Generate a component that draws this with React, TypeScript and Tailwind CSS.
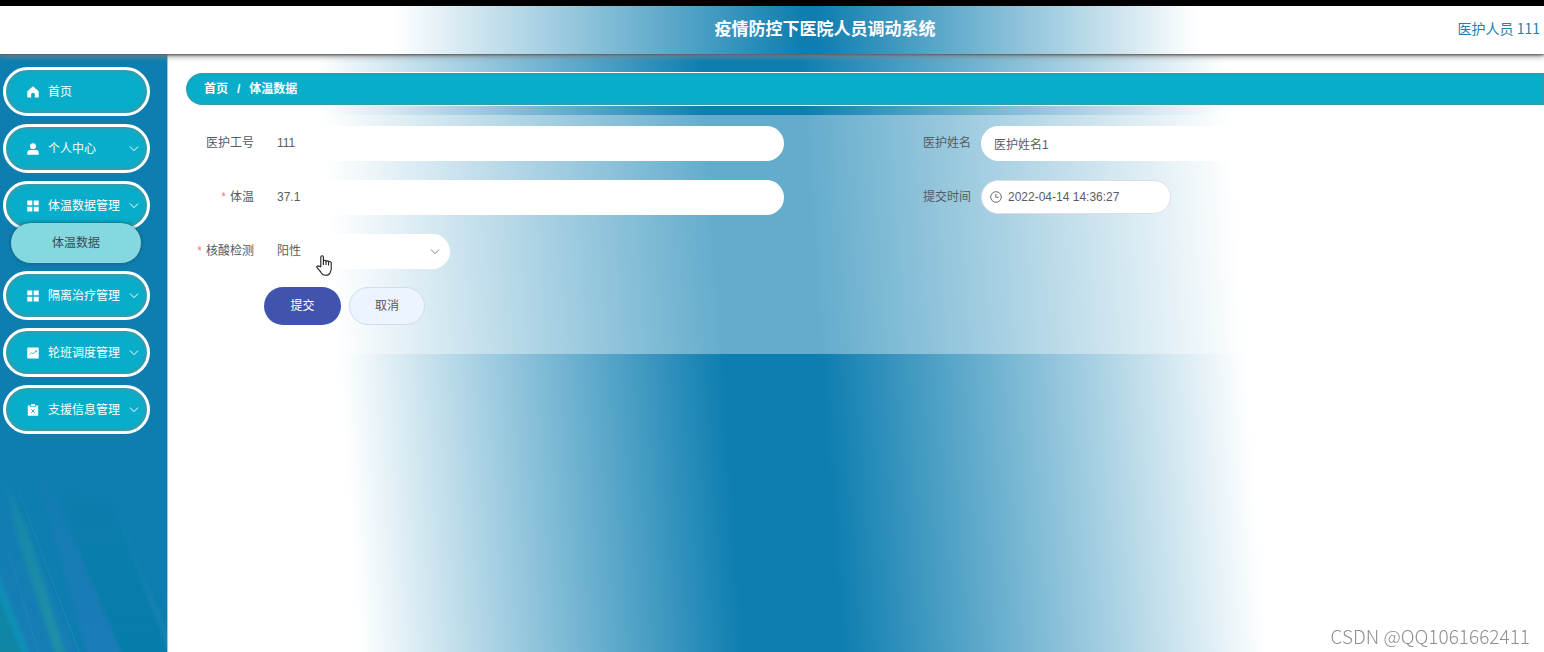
import type { ReactNode } from "react";

function HomeIcon() {
  return (
    <svg viewBox="0 0 12 12" className="size-3" fill="currentColor" aria-hidden="true">
      <path d="M6 .3 11.700 5.200V10.900a.7.7 0 0 1-.7.7H7.900V8.600a1.900 1.900 0 0 0-3.800 0v3H1a.7.7 0 0 1-.7-.7V5.200Z" />
    </svg>
  );
}

function UserIcon() {
  return (
    <svg viewBox="0 0 12 12" className="size-3" fill="currentColor" aria-hidden="true">
      <circle cx="6" cy="3.200" r="3" />
      <path d="M.3 11.700V9.800A2.800 2.800 0 0 1 3.100 7h5.800a2.800 2.800 0 0 1 2.800 2.800v1.900Z" />
    </svg>
  );
}

function GridIcon() {
  return (
    <svg viewBox="0 0 12 12" className="size-3" fill="currentColor" aria-hidden="true">
      <path d="M.3 .5h5v4.800h-5zM6.700 .5h5v4.800h-5zM.3 6.700h5v4.800h-5zM6.700 6.700h5v4.800h-5z" />
    </svg>
  );
}

function TrendIcon() {
  return (
    <svg viewBox="0 0 12 12" className="size-3" aria-hidden="true">
      <rect x=".3" y=".5" width="11.400" height="11" rx=".5" fill="currentColor" />
      <path d="M2.400 7.600 4.400 5.600 6 6.800 9.400 3.900M7.900 3.800h1.600v1.500" fill="none" stroke="#0aaecb" strokeWidth=".7" />
    </svg>
  );
}

function ClipboardIcon() {
  return (
    <svg viewBox="0 0 12 12" className="size-3" aria-hidden="true">
      <path d="M.8 1.500h2.500V3h5.400V1.500h2.500v10.200H.8Z" fill="currentColor" />
      <path d="M4 .2h4v2.100H4z" fill="currentColor" />
      <path d="m4.300 5.200 3.400 3.600M7.700 5.200 4.300 8.800" stroke="#0aaecb" strokeWidth=".9" />
    </svg>
  );
}

function Chevron({ className }: { className: string }) {
  return (
    <svg viewBox="0 0 10 6" className={className} fill="none" stroke="currentColor" aria-hidden="true">
      <path d="m1.200.8 3.800 3.900 3.800-3.900" strokeLinecap="round" />
    </svg>
  );
}

function ClockIcon() {
  return (
    <svg viewBox="0 0 12 12" className="size-3 shrink-0" fill="none" stroke="currentColor" aria-hidden="true">
      <circle cx="6" cy="6" r="5.300" strokeWidth=".9" />
      <path d="M5.800 3v3.300h2.800" strokeWidth=".9" />
    </svg>
  );
}

function Streaks() {
  return (
    <svg
      viewBox="0 0 167 212"
      className="pointer-events-none absolute bottom-0 left-0 h-[212px] w-full"
      preserveAspectRatio="none"
      aria-hidden="true"
    >
      <defs>
        <linearGradient id="fade" x1="0" y1="0" x2="0" y2="1">
          <stop offset="0" stopColor="#fff" stopOpacity="0" />
          <stop offset=".45" stopColor="#fff" stopOpacity=".55" />
          <stop offset="1" stopColor="#fff" stopOpacity=".9" />
        </linearGradient>
        <filter id="soft" x="-20%" y="-20%" width="140%" height="140%">
          <feGaussianBlur stdDeviation="2" />
        </filter>
        <mask id="fadeMask">
          <rect width="167" height="212" fill="url(#fade)" />
        </mask>
      </defs>
      <g mask="url(#fadeMask)">
        <g filter="url(#soft)">
          <path d="M60 50 112 60 172 190V216H122L80 120Z" fill="#0a7ba2" opacity=".5" />
          <path d="M34 25 50 45 78 110 122 216H88L60 120Z" fill="#2a7cbf" opacity=".6" />
          <path d="M0 30 28 90 78 216H20L-4 150Z" fill="#2a7cbf" opacity=".4" />
          <path d="M4 35 28 90 66 216H56L18 100Z" fill="#24a09a" opacity=".6" />
          <path d="M-4 134 28 216H-4Z" fill="#0b8a9c" opacity=".7" />
          <path d="M-4 130 30 216H24L-4 150Z" fill="#0fa0c2" opacity=".7" />
          <path d="M112 60 170 195V216L130 110Z" fill="#2385bb" opacity=".6" />
        </g>
        <path d="M18 50 79 212" stroke="#3aa3b8" strokeWidth="1" opacity=".45" />
        <path d="M8 110 38 212" stroke="#3d92cc" strokeWidth="1" opacity=".4" />
      </g>
    </svg>
  );
}

interface MenuEntry {
  label: string;
  icon: ReactNode;
  expandable: boolean;
  child?: string;
}

const menu: MenuEntry[] = [
  { label: "首页", icon: <HomeIcon />, expandable: false },
  { label: "个人中心", icon: <UserIcon />, expandable: true },
  { label: "体温数据管理", icon: <GridIcon />, expandable: true, child: "体温数据" },
  { label: "隔离治疗管理", icon: <GridIcon />, expandable: true },
  { label: "轮班调度管理", icon: <TrendIcon />, expandable: true },
  { label: "支援信息管理", icon: <ClipboardIcon />, expandable: true },
];

function Sidebar() {
  return (
    <aside className="relative w-[168px] shrink-0 border-r border-[#8fd0e4] bg-[#0e7eb0] pt-[13px] pr-[17px] pl-[3px]">
      <Streaks />
      <nav className="relative">
        <ul className="flex flex-col gap-2">
          {menu.map((item) => (
            <li key={item.label}>
              <button
                type="button"
                className="flex h-[49px] w-full items-center rounded-[25px] border-3 border-white bg-[#08adc9] pr-2 pl-[21px] text-white shadow-[inset_0_0_4px_#808080]"
              >
                {item.icon}
                <span className="ml-[9px] flex-1 text-left">{item.label}</span>
                {item.expandable && <Chevron className="h-[6px] w-[10px]" />}
              </button>
              {item.child && (
                <a
                  href="#temperature"
                  className="relative -mt-[7px] mr-[9px] ml-2 flex h-10 items-center justify-center rounded-[20px] bg-[#85d7e0] text-[#404a50] shadow-[0_0_4px_#17596f]"
                >
                  {item.child}
                </a>
              )}
            </li>
          ))}
        </ul>
      </nav>
    </aside>
  );
}

function Field({ id, label, required, children }: { id: string; label: string; required?: boolean; children: ReactNode }) {
  return (
    <div className="flex items-center">
      <label htmlFor={id} className="w-[68px] shrink-0 text-right text-[#555b61]">
        {required && <span className="mr-1 text-[#f77]">*</span>}
        {label}
      </label>
      <div className="ml-[10px] flex h-9 max-w-[520px] flex-1 items-center">{children}</div>
    </div>
  );
}

const inputClass = "h-[35px] w-full min-w-0 rounded-[18px] bg-white px-[13px] text-[#5a5d62] outline-none";

function HandCursor() {
  return (
    <svg
      viewBox="0 0 16 21"
      className="pointer-events-none absolute top-[21px] left-[52px] h-[21px] w-4"
      fill="#fff"
      stroke="#222"
      strokeWidth="1.1"
      strokeLinejoin="round"
      aria-hidden="true"
    >
      <path d="M4.800 11.600V2a1.300 1.300 0 0 1 2.600 0v4.400a1.300 1.300 0 0 1 2.600.5 1.300 1.300 0 0 1 2.600.6 1.300 1.300 0 0 1 2.600.9V14c0 2-.9 2.600-1.300 4-.6 1.600-2 2.300-4.300 2.300-2.400 0-3.500-.8-4.300-2.300C4.500 16 2.800 14.900.9 12.400c-.5-1 .6-2 1.700-1.300Z" />
      <path d="M7.400 6v4M10 7v3M12.600 8v2.400" />
    </svg>
  );
}

function EntryForm() {
  return (
    <form
      className="mt-[9px] bg-white/36 pt-[10px] pb-[29px] pl-[18px]"
      onSubmit={(event) => event.preventDefault()}
    >
      <div className="grid grid-cols-[717fr_641fr] gap-y-[18px]">
        <Field id="staff-no" label="医护工号">
          <input id="staff-no" type="text" readOnly defaultValue="111" className={inputClass} />
        </Field>
        <Field id="staff-name" label="医护姓名">
          <input id="staff-name" type="text" readOnly defaultValue="医护姓名1" className={inputClass} />
        </Field>
        <Field id="temperature" label="体温" required>
          <input id="temperature" type="text" defaultValue="37.1" className={inputClass} />
        </Field>
        <Field id="submitted" label="提交时间">
          <div className="flex h-[34px] w-[190px] items-center gap-[6px] rounded-[17px] border border-[#dcdfe6] bg-white pr-3 pl-2 text-[#5a5d62]">
            <ClockIcon />
            <input
              id="submitted"
              type="text"
              defaultValue="2022-04-14 14:36:27"
              className="w-full min-w-0 bg-transparent outline-none"
            />
          </div>
        </Field>
        <Field id="nucleic" label="核酸检测" required>
          <div className="relative w-[186px]">
            <select
              id="nucleic"
              defaultValue="阳性"
              className="block h-[35px] w-full appearance-none rounded-[18px] bg-white px-[13px] text-[#5a5d62] outline-none"
            >
              <option>阳性</option>
              <option>阴性</option>
            </select>
            <Chevron className="pointer-events-none absolute top-[15px] right-[10px] h-[6px] w-[10px] text-[#85898f]" />
            <HandCursor />
          </div>
        </Field>
      </div>
      <div className="mt-[18px] ml-[78px] flex gap-2">
        <button type="submit" className="h-[38px] w-[77px] rounded-[19px] bg-[#4054ae] text-white">
          提交
        </button>
        <button
          type="button"
          className="h-[38px] w-[76px] rounded-[19px] border border-[#d3dced] bg-[#ebf4ff] text-[#55595f]"
        >
          取消
        </button>
      </div>
    </form>
  );
}

export default function App() {
  return (
    <div className="flex min-h-screen flex-col overflow-x-hidden border-t-6 border-black bg-white font-['Liberation_Sans','Noto_Sans_CJK_SC',sans-serif] text-xs">
      <header className="relative z-10 grid h-12 grid-cols-[1fr_auto_1fr] items-center bg-[linear-gradient(90deg,#fff_25.5%,#0e7eb0_52%,#0e7eb0_53%,#fff_77.5%)] pr-1 shadow-[0_1px_2px_#5a5a5a,0_2px_6px_#888]">
        <h1 className="col-start-2 ml-[110px] text-[17px] font-bold text-white">疫情防控下医院人员调动系统</h1>
        <p className="pb-1 text-right font-['Noto_Sans_CJK_SC',sans-serif] text-sm text-[#2381ad]">医护人员 111</p>
      </header>
      <div className="flex flex-1">
        <Sidebar />
        <main className="min-w-0 flex-1 bg-[linear-gradient(86deg,#fff_13.5%,#0e7eb0_40.6%,#0e7eb0_47.5%,#fff_77.5%)] pt-[18px]">
          <nav
            aria-label="路径"
            className="ml-[17px] flex h-[34px] items-center gap-[9px] rounded-l-[17px] border border-r-0 border-white bg-[#08adc9] pl-[18px] font-bold text-white shadow-[inset_0_0_3px_#808080]"
          >
            <a href="#home">首页</a>
            <span>/</span>
            <span>体温数据</span>
          </nav>
          <EntryForm />
        </main>
      </div>
      <p className="pointer-events-none fixed right-[14px] bottom-1 font-['Noto_Sans_CJK_SC',sans-serif] text-[19px] font-light text-[#8f8f8f]">
        CSDN @QQ1061662411
      </p>
    </div>
  );
}
